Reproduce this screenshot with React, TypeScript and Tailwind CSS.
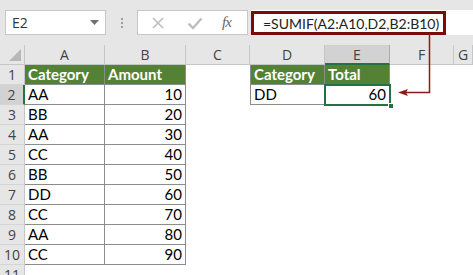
import React from "react";

const cols = ["A", "B", "C", "D", "E", "F", "G"];

const data: [string, string][] = [
  ["AA", "10"],
  ["BB", "20"],
  ["AA", "30"],
  ["CC", "40"],
  ["BB", "50"],
  ["DD", "60"],
  ["CC", "70"],
  ["AA", "80"],
  ["CC", "90"],
];

const cellFont = "font-['Lato','Liberation_Sans',sans-serif] text-[15px] leading-[19px]";
const tb = "border-[#8c8c8c]";

function HeaderCell({ label, active }: { label: string; active?: boolean }) {
  return (
    <div
      className={`flex items-center justify-center border-r border-b text-[14px] text-[#444] ${
        active ? "bg-[#d2d2d2] border-b-2 border-b-[#217346] border-r-[#ababab]" : "bg-[#e6e6e6] border-[#c6c6c6]"
      }`}
    >
      {label}
    </div>
  );
}

function RowHead({ n, active }: { n: number; active?: boolean }) {
  return (
    <div
      className={`flex items-center justify-center border-b text-[14px] text-[#444] ${
        active
          ? "bg-[#d2d2d2] border-r-2 border-r-[#217346] border-b-[#d4d4d4]"
          : "bg-[#e6e6e6] border-r border-r-[#c6c6c6] border-b-[#d4d4d4]"
      }`}
    >
      {n}
    </div>
  );
}

function Cell({
  children,
  cls = "",
}: {
  children?: React.ReactNode;
  cls?: string;
}) {
  return <div className={`flex items-center px-[3px] overflow-hidden whitespace-nowrap ${cellFont} ${cls}`}>{children}</div>;
}

export default function App() {
  return (
    <div className="relative w-[473px] h-[275px] overflow-hidden bg-white font-['Open_Sans','Liberation_Sans',sans-serif]">
      {/* formula bar */}
      <div className="h-[45px] bg-[#e6e6e6] flex items-start pt-[10px]">
        <div className="ml-[5px] w-[101px] h-[25px] bg-white border border-[#c6c6c6] flex items-center justify-between pl-[6px] pr-[6px]">
          <span className="text-[14px] text-[#333] font-['Open_Sans',sans-serif]">E2</span>
          <svg width="9" height="5" viewBox="0 0 9 5">
            <polygon points="0,0 9,0 4.5,5" fill="#707070" />
          </svg>
        </div>
        <div className="w-[31px] h-[25px] flex flex-col items-center justify-center gap-[2px]">
          <span className="w-[2px] h-[2px] bg-[#a0a0a0]" />
          <span className="w-[2px] h-[2px] bg-[#a0a0a0]" />
          <span className="w-[2px] h-[2px] bg-[#a0a0a0]" />
        </div>
        <div className="w-[111px] h-[25px] bg-white border border-[#c6c6c6] flex items-center pl-[13px]">
          <svg width="14" height="14" viewBox="0 0 14 14">
            <path d="M2 2 L12 12 M12 2 L2 12" stroke="#bdbdbd" strokeWidth="1.6" />
          </svg>
          <svg className="ml-[22px]" width="16" height="14" viewBox="0 0 16 14">
            <path d="M1.5 7.5 L6 12 L14.5 2.5" stroke="#bdbdbd" strokeWidth="2.4" fill="none" />
          </svg>
          <span className="ml-[19px] text-[15px] italic text-[#666] font-['Liberation_Serif',serif] tracking-[-1px]">fx</span>
        </div>
        <div className="ml-[3px] flex-1 h-[25px] bg-white flex">
          <div className="w-[195px] h-[24px] mt-[1px] border-[3px] border-[#7b0a0a] flex items-center pl-[9px]">
            <span className="font-['Lato',sans-serif] text-[14px] text-[#222]">=SUMIF(A2:A10,D2,B2:B10)</span>
          </div>
        </div>
      </div>

      {/* sheet */}
      <div className="grid grid-cols-[25px_80px_81px_64px_75px_65px_64px_1fr] auto-rows-[20px]">
        <div className="relative bg-[#e6e6e6] border-r border-b border-[#c6c6c6]">
          <svg className="absolute right-[3px] bottom-[3px]" width="12" height="12" viewBox="0 0 12 12">
            <polygon points="12,0 12,12 0,12" fill="#b8b8b8" />
          </svg>
        </div>
        {cols.map((c) => (
          <HeaderCell key={c} label={c} active={c === "E"} />
        ))}

        {/* row 1 */}
        <RowHead n={1} />
        <Cell cls={`bg-[#548235] text-white font-bold border-r border-b ${tb}`}>Category</Cell>
        <Cell cls={`bg-[#548235] text-white font-bold border-r border-b ${tb}`}>Amount</Cell>
        <Cell />
        <Cell cls={`bg-[#548235] text-white font-bold border-l border-r border-b ${tb}`}>Category</Cell>
        <Cell cls={`bg-[#548235] text-white font-bold border-r border-b ${tb}`}>Total</Cell>
        <Cell />
        <Cell />

        {data.map(([cat, amt], i) => {
          const r = i + 2;
          return (
            <React.Fragment key={r}>
              <RowHead n={r} active={r === 2} />
              <Cell cls={`text-black border-r border-b ${tb}`}>{cat}</Cell>
              <Cell cls={`text-black justify-end border-r border-b ${tb}`}>{amt}</Cell>
              <Cell />
              {r === 2 ? (
                <>
                  <Cell cls={`text-black border-l border-r border-b ${tb}`}>DD</Cell>
                  <Cell cls={`text-black justify-end border-r border-b ${tb}`}>60</Cell>
                </>
              ) : (
                <>
                  <Cell />
                  <Cell />
                </>
              )}
              <Cell />
              <Cell />
            </React.Fragment>
          );
        })}
        <RowHead n={11} />
      </div>

      {/* selection on E2 */}
      <div className="absolute left-[324px] top-[84px] w-[67px] h-[22px] border-2 border-[#217346] pointer-events-none" />
      <div className="absolute left-[388px] top-[103px] w-[6px] h-[6px] bg-[#217346] border border-white pointer-events-none" />

      {/* annotation arrow */}
      <svg className="absolute left-0 top-0 pointer-events-none" width="473" height="275" viewBox="0 0 473 275">
        <polyline points="429.5,34 429.5,92.5 404,92.5" fill="none" stroke="#8b1a1a" strokeWidth="1.5" />
        <polygon points="398,92.5 408,89 406,92.5 408,96" fill="#8b1a1a" />
      </svg>
    </div>
  );
}
